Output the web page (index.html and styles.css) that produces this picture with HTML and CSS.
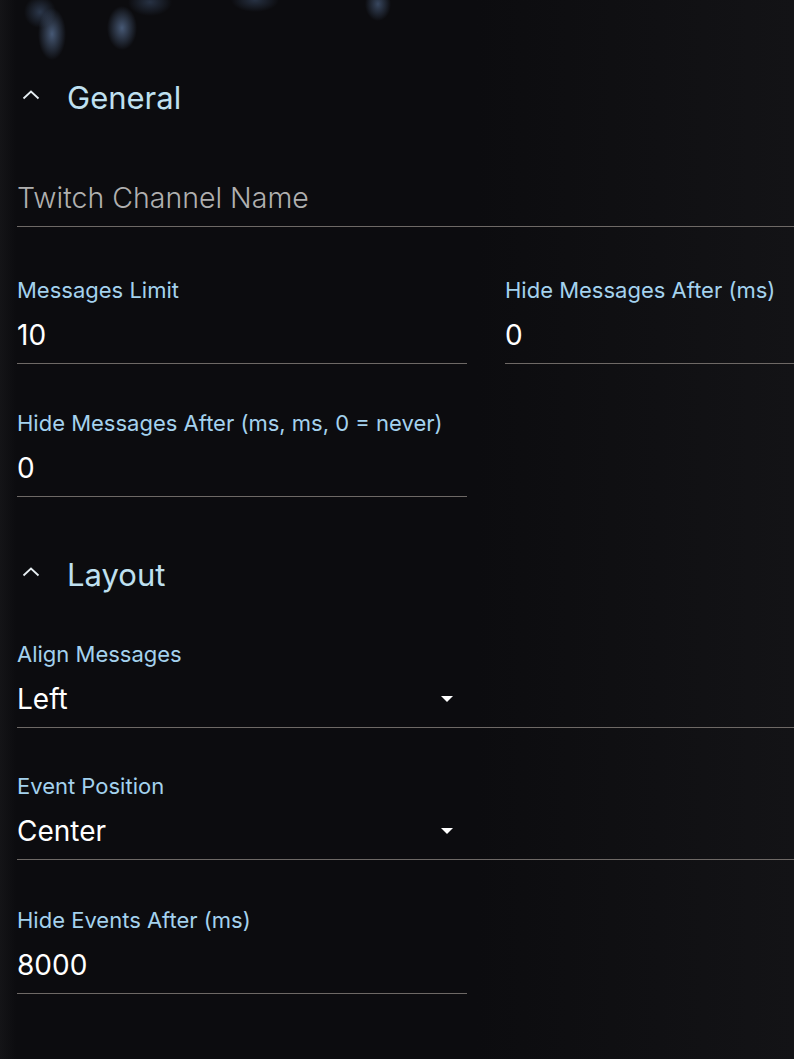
FILE: index.html
```html
<!DOCTYPE html>
<html lang="en">
<head>
  <meta charset="UTF-8">
  <title>Chat Widget Settings</title>
  <link rel="stylesheet" href="styles.css">
</head>
<body>

  <div class="settings">
    <div class="group-head general">
      <svg class="chevron" width="18" height="10" viewBox="0 0 18 10"><path d="M1.5 8.5 L9 1.5 L16.5 8.5" fill="none" stroke="#e6eef2" stroke-width="1.8"/></svg>
      <span>General</span>
    </div>

    <div class="field full channel">
      <div class="placeholder">Twitch Channel Name</div>
    </div>

    <div class="row first">
      <div class="field">
        <label>Messages Limit</label>
        <div class="value">10</div>
      </div>
      <div class="field">
        <label>Hide Messages After (ms)</label>
        <div class="value">0</div>
      </div>
    </div>

    <div class="row">
      <div class="field">
        <label>Hide Messages After (ms, ms, 0 = never)</label>
        <div class="value">0</div>
      </div>
    </div>

    <div class="group-head layout">
      <svg class="chevron" width="18" height="10" viewBox="0 0 18 10"><path d="M1.5 8.5 L9 1.5 L16.5 8.5" fill="none" stroke="#e6eef2" stroke-width="1.8"/></svg>
      <span>Layout</span>
    </div>

    <div class="field full select first-after-head">
      <label>Align Messages</label>
      <div class="value"><span>Left</span><i class="caret"></i></div>
    </div>

    <div class="field full select">
      <label>Event Position</label>
      <div class="value"><span>Center</span><i class="caret"></i></div>
    </div>

    <div class="row last">
      <div class="field">
        <label>Hide Events After (ms)</label>
        <div class="value">8000</div>
      </div>
    </div>
  </div>

</body>
</html>
```

FILE: styles.css
```css
html, body {
  margin: 0;
  height: 100%;
}

body {
  background:
    radial-gradient(ellipse 14px 26px at 52px 34px, rgba(110, 140, 185, 0.6) 0, rgba(110, 140, 185, 0) 100%),
    radial-gradient(ellipse 15px 22px at 122px 28px, rgba(110, 140, 185, 0.6) 0, rgba(110, 140, 185, 0) 100%),
    radial-gradient(ellipse 16px 16px at 40px 12px, rgba(90, 120, 165, 0.4) 0, rgba(90, 120, 165, 0) 100%),
    radial-gradient(ellipse 22px 14px at 150px 2px, rgba(90, 120, 165, 0.35) 0, rgba(90, 120, 165, 0) 100%),
    radial-gradient(ellipse 24px 12px at 255px 0px, rgba(90, 120, 165, 0.35) 0, rgba(90, 120, 165, 0) 100%),
    radial-gradient(ellipse 13px 17px at 378px 4px, rgba(100, 130, 175, 0.5) 0, rgba(100, 130, 175, 0) 100%),
    linear-gradient(90deg, #141417 0, #0c0c0f 16px, #0c0c0f 60%, #131316 100%);
  font-family: Inter, Lato, sans-serif;
  color: #fff;
  overflow: hidden;
}

.settings {
  padding: 77px 0 0 17px;
}

.group-head {
  display: flex;
  align-items: center;
  height: 40px;
  font-size: 31px;
  color: #bfe0f0;
}

.group-head .chevron {
  margin: -4px 27px 0 5px;
}

.layout {
  margin-top: 57px;
}

.field {
  border-bottom: 1px solid #6e6966;
  padding-bottom: 8px;
}

.field label {
  display: block;
  height: 30px;
  line-height: 30px;
  font-size: 22px;
  color: #a4d2ee;
  margin-bottom: 10px;
}

.field .value {
  height: 40px;
  line-height: 40px;
  font-size: 28px;
  color: #fff;
}

.channel {
  margin-top: 61px;
}

.channel .placeholder {
  height: 40px;
  line-height: 40px;
  font-size: 28.5px;
  font-weight: 300;
  color: #b0b0b0;
}

.row {
  display: grid;
  grid-template-columns: 450px 1fr;
  column-gap: 38px;
  margin-top: 44px;
}

.row.first {
  margin-top: 48px;
}

.row.last {
  margin-top: 45px;
}

.select {
  margin-top: 43px;
}

.select.first-after-head {
  margin-top: 45px;
}

.select .value {
  width: 450px;
  display: flex;
  justify-content: space-between;
  align-items: center;
}

.caret {
  width: 0;
  height: 0;
  border-left: 6px solid transparent;
  border-right: 6px solid transparent;
  border-top: 6px solid #fff;
  margin-right: 14px;
}
```
